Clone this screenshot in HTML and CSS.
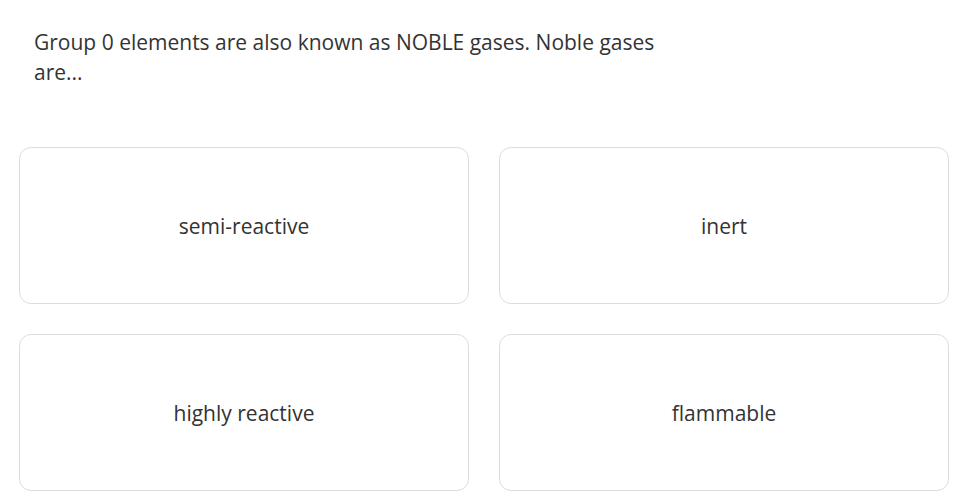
FILE: index.html
```html
<!DOCTYPE html>
<html lang="en">
<head>
    <meta charset="UTF-8">
    <meta name="viewport" content="width=device-width, initial-scale=1.0">
    <title>Quiz</title>
    <link rel="stylesheet" href="styles.css">
</head>
<body>
    <div class="quiz">
        <p class="question">Group 0 elements are also known as NOBLE gases. Noble gases are...</p>
        <div class="answers">
            <button class="answer">semi-reactive</button>
            <button class="answer">inert</button>
            <button class="answer">highly reactive</button>
            <button class="answer">flammable</button>
        </div>
    </div>
</body>
</html>
```

FILE: styles.css
```css
body {
    font-family: "Open Sans", Arial, sans-serif;
    background-color: #fff;
    margin: 0;
    padding: 0;
    color: #333;
}

.quiz {
    padding: 27px 11px 0 19px;
}

.question {
    margin: 0 0 0 15px;
    max-width: 650px;
    font-size: 21px;
    line-height: 30px;
    color: #333;
}

.answers {
    display: grid;
    grid-template-columns: 450px 450px;
    grid-auto-rows: 157px;
    gap: 30px;
    margin-top: 60px;
}

.answer {
    background: #fff;
    border: 1px solid #dcdcdc;
    border-radius: 12px;
    font-family: "Open Sans", Arial, sans-serif;
    font-size: 21px;
    color: #333;
    cursor: pointer;
    padding: 0;
}
```
